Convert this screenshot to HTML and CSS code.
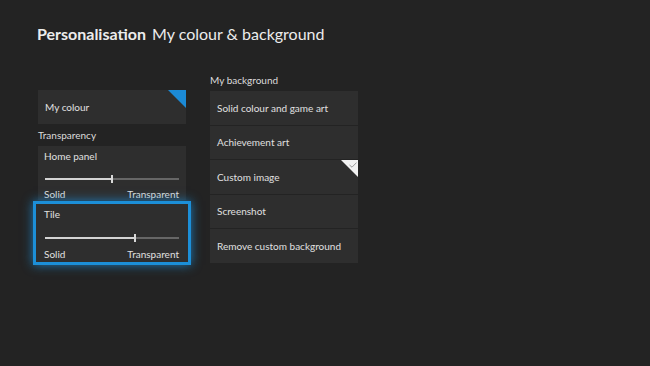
FILE: index.html
```html
<!DOCTYPE html>
<html lang="en">
<head>
    <meta charset="UTF-8" />
    <title>Personalisation</title>
    <link rel="stylesheet" href="styles.css">
</head>
<body>
<div class="page">
    <h1 class="title"><b>Personalisation</b> My colour &amp; background</h1>

    <div class="columns">
        <div class="col col-left">
            <div class="tile colour-tile">
                My colour
                <span class="corner corner-blue"></span>
            </div>

            <div class="label">Transparency</div>

            <div class="card">
                <div class="card-name">Home panel</div>
                <div class="slider"><div class="fill" style="width: 50%"></div><div class="thumb" style="left: 50%"></div></div>
                <div class="ends"><span>Solid</span><span>Transparent</span></div>
            </div>

            <div class="card selected">
                <div class="card-name">Tile</div>
                <div class="slider"><div class="fill" style="width: 67%"></div><div class="thumb" style="left: 67%"></div></div>
                <div class="ends"><span>Solid</span><span>Transparent</span></div>
            </div>
        </div>

        <div class="col col-right">
            <div class="label head">My background</div>
            <div class="list">
                <div class="tile">Solid colour and game art</div>
                <div class="tile">Achievement art</div>
                <div class="tile">
                    Custom image
                    <span class="corner corner-white">
                        <svg width="8" height="6" viewBox="0 0 8 6"><path d="M0.5 3 L3 5.2 L7.5 0.6" fill="none" stroke="#9a9a9a" stroke-width="1"/></svg>
                    </span>
                </div>
                <div class="tile">Screenshot</div>
                <div class="tile">Remove custom background</div>
            </div>
        </div>
    </div>
</div>
</body>
</html>
```

FILE: styles.css
```css
body {
    margin: 0;
    background: #232323;
    color: #e4e4e4;
    font-family: Lato, "Open Sans", sans-serif;
    height: 366px;
    overflow: hidden;
}
.page {
    padding: 24px 0 0 37px;
}
.title {
    margin: 0;
    font-size: 16px;
    line-height: 20px;
    font-weight: 400;
    color: #ececec;
}
.title b {
    font-weight: 700;
    margin-right: 2px;
}
.columns {
    display: flex;
    gap: 24px;
    margin-top: 30px;
    padding-left: 1px;
}
.col {
    width: 148px;
    display: flex;
    flex-direction: column;
}
.col-left {
    padding-top: 16px;
}
.label {
    font-size: 10px;
    line-height: 12px;
    color: #dcdcdc;
    margin: 5px 0;
}
.label.head {
    margin: 0 0 5px;
}
.tile {
    position: relative;
    background: #2e2e2e;
    height: 34px;
    display: flex;
    align-items: center;
    padding-left: 7px;
    font-size: 10px;
    color: #e0e0e0;
}
.list {
    display: flex;
    flex-direction: column;
    gap: 1px;
}
.list .tile {
    height: 33.5px;
}
.corner {
    position: absolute;
    top: 0;
    right: 0;
    width: 0;
    height: 0;
    border-style: solid;
    border-width: 0 18px 18px 0;
}
.corner-blue {
    border-color: transparent #1b8ad6 transparent transparent;
}
.corner-white {
    border-width: 0 17px 17px 0;
    border-color: transparent #f2f2f2 transparent transparent;
}
.corner-white svg {
    position: absolute;
    left: 8px;
    top: 2px;
}
.card {
    background: #2e2e2e;
    padding: 4px 7px 0 6px;
    font-size: 10px;
    color: #e0e0e0;
}
.card-name {
    line-height: 12px;
}
.slider {
    position: relative;
    height: 2px;
    background: #666;
    margin: 16px 0 8px 1px;
}
.fill {
    height: 2px;
    background: #d4d4d4;
}
.thumb {
    position: absolute;
    top: -3px;
    width: 2px;
    height: 8px;
    margin-left: -1px;
    background: #d8d8d8;
}
.ends {
    display: flex;
    justify-content: space-between;
    line-height: 12px;
}
.selected {
    margin: 1px -5px 0;
    border: 3px solid #1c8fd8;
    padding: 4px 9px 2px 8px;
    box-shadow: 0 0 10px rgba(28, 143, 216, 0.8);
}
.selected .slider {
    margin: 17px 0 9px 1px;
}
```
